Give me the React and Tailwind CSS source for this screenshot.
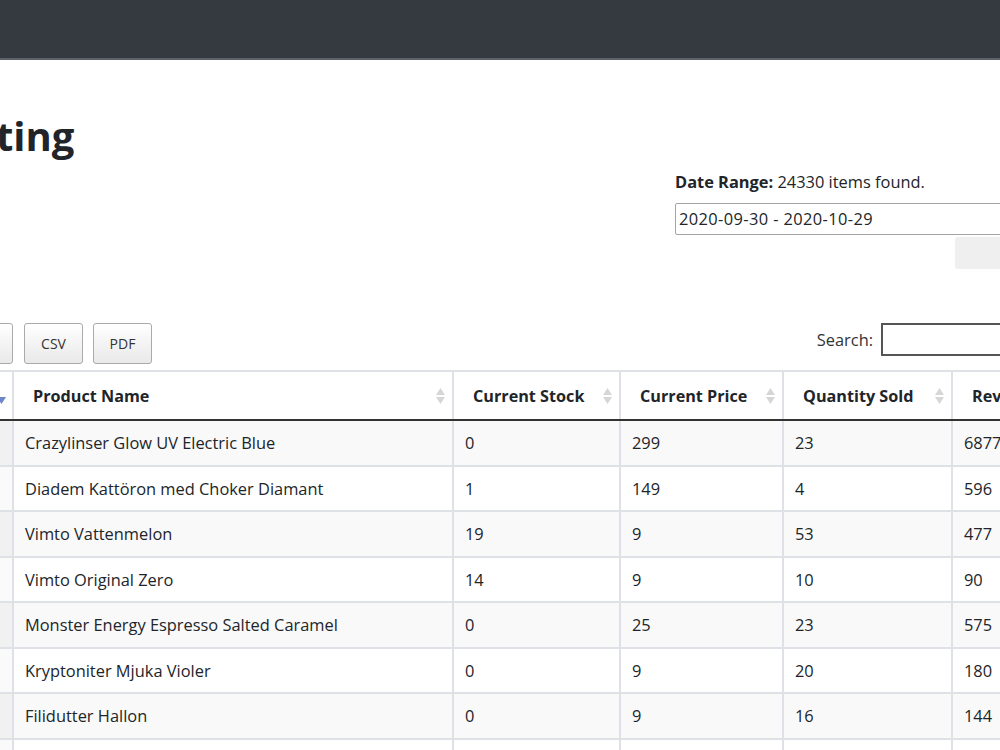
import React from "react";

const rows = [
  ["Crazylinser Glow UV Electric Blue", "0", "299", "23", "6877"],
  ["Diadem Kattöron med Choker Diamant", "1", "149", "4", "596"],
  ["Vimto Vattenmelon", "19", "9", "53", "477"],
  ["Vimto Original Zero", "14", "9", "10", "90"],
  ["Monster Energy Espresso Salted Caramel", "0", "25", "23", "575"],
  ["Kryptoniter Mjuka Violer", "0", "9", "20", "180"],
  ["Filidutter Hallon", "0", "9", "16", "144"],
  ["", "", "", "", ""],
];

const grid = "grid grid-cols-[14px_440px_167px_163px_169px_200px]";

function SortIcon() {
  return (
    <svg width="9" height="16" viewBox="0 0 9 16" className="shrink-0">
      <polygon points="0,7 4.5,0 9,7" fill="#d6d6d6" />
      <polygon points="0,9 9,9 4.5,16" fill="#d6d6d6" />
    </svg>
  );
}

function SortDesc() {
  return (
    <svg width="9" height="16" viewBox="0 0 9 16" className="shrink-0">
      <polygon points="0,9 9,9 4.5,16" fill="#6b86c9" />
    </svg>
  );
}

const headers = ["Product Name", "Current Stock", "Current Price", "Quantity Sold", "Revenue"];

export default function App() {
  return (
    <div className="w-[1000px] h-[750px] overflow-hidden bg-white text-[#212529] font-['Open_Sans',sans-serif]">
      <nav className="h-[60px] bg-[#343a40] border-b-2 border-[#5b6269]" />
      <div className="flex h-[209px]">
        <div className="w-[675px] shrink-0">
          <h1 className="mt-[52px] text-[40px] leading-[48px] font-bold -ml-[4px]">ting</h1>
        </div>
        <div className="w-[400px] shrink-0">
          <div className="mt-[110px] text-[16.4px] leading-6 whitespace-nowrap">
            <span className="font-bold">Date Range:</span> 24330 items found.
          </div>
          <div className="mt-[9px] h-[32px] border border-[#a5a5a5] rounded-[2px] flex items-center pl-[3px] pt-[1px] text-[16.4px] tracking-[0.4px] whitespace-nowrap">
            2020-09-30 - 2020-10-29
          </div>
          <div className="mt-[2px] ml-[280px] w-[100px] h-[32px] bg-[#efefef] rounded-[3px]" />
        </div>
      </div>

      <div className="mt-[54px] flex items-start h-[41px]">
        <div className="-ml-[47px] w-[60px] h-[41px] border border-[#aaa] rounded-[3px] bg-gradient-to-b from-white to-[#e9e9e9]" />
        <div className="ml-[11px] w-[59px] h-[41px] border border-[#aaa] rounded-[3px] bg-gradient-to-b from-white to-[#e9e9e9] flex items-center justify-center text-[14px] text-[#333]">
          CSV
        </div>
        <div className="ml-[10px] w-[59px] h-[41px] border border-[#aaa] rounded-[3px] bg-gradient-to-b from-white to-[#e9e9e9] flex items-center justify-center text-[14px] text-[#333]">
          PDF
        </div>
        <div className="ml-auto flex items-center h-[33px] -mr-[101px]">
          <span className="text-[16.4px] text-[#333] pt-[2px]">Search:</span>
          <div className="ml-[8px] w-[220px] h-[33px] border-2 border-[#555] bg-white" />
        </div>
      </div>

      <div className="mt-[6px] w-[1153px] border-t-2 border-[#dee2e6]">
        <div className={`${grid} h-[49px] border-b-2 border-[#333] bg-white`}>
          <div className="border-r-2 border-[#dee2e6] overflow-hidden flex items-center justify-end pr-[6px]">
            <SortDesc />
          </div>
          {headers.map((h) => (
            <div
              key={h}
              className="border-r-2 border-[#dee2e6] flex items-center justify-between pl-[19px] pr-[7px] font-bold text-[16.2px] whitespace-nowrap"
            >
              <span className="pt-[2px]">{h}</span>
              <SortIcon />
            </div>
          ))}
        </div>
        {rows.map((r, i) => {
          const odd = i % 2 === 0;
          return (
            <div key={i} className={`${grid} h-[45.5px] ${odd ? "bg-[#f9f9f9]" : "bg-white"}`}>
              <div className={`border-r-2 border-b-2 border-[#dee2e6] ${odd ? "bg-[#f1f1f1]" : "bg-[#fafafa]"}`} />
              {r.map((c, j) => (
                <div
                  key={j}
                  className="border-r-2 border-b-2 border-[#dee2e6] flex items-center pl-[11px] pt-[2px] text-[16.4px] whitespace-nowrap overflow-hidden"
                >
                  {c}
                </div>
              ))}
            </div>
          );
        })}
      </div>
    </div>
  );
}
